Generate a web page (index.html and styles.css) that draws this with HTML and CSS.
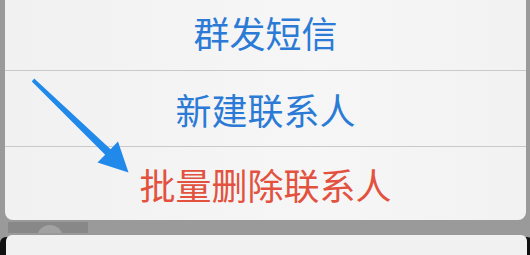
FILE: index.html
```html
<html>
   <head>
      <title>Contacts menu</title>
      <meta charset="utf-8">
      <link rel="stylesheet" href="styles.css">
   </head>

   <body>
      <div class="screen">
         <div class="sheet">
            <div class="item first blue">群发短信</div>
            <div class="item blue">新建联系人</div>
            <div class="item last red">批量删除联系人</div>
         </div>
         <div class="gap">
            <div class="ghost"><span class="knob"></span></div>
         </div>
         <div class="cancel"></div>
         <svg class="arrow" width="530" height="255" viewBox="0 0 530 255">
            <polygon points="34.2,78.6 110.6,149.2 118,141.5 128.5,172.5 97.5,162.5 105.2,154.8 31.8,81.4" fill="#2189ea"/>
         </svg>
      </div>
   </body>
</html>
```

FILE: styles.css
```css
body {margin: 0; background: #9a9a9a; font-family: "Noto Sans CJK SC", "Noto Sans", sans-serif;}
.screen {position: relative; width: 530px; height: 255px; overflow: hidden; background: #9a9a9a;}
.sheet {margin: 0 4px 0 5px; background: linear-gradient(to right, #f1f1f1, #f6f6f6 60%, #f2f2f2); border-radius: 0 0 8px 8px;}
.item {height: 75px; display: flex; align-items: center; justify-content: center; font-size: 36px; border-top: 1px solid #c9c9c9;}
.item.first {height: 70px; border-top: none; padding-bottom: 0; margin-top: 0; align-items: flex-start; line-height: 64px;}
.item.last {height: 73px;}
.blue {color: #2b7bd6;}
.red {color: #e2523e;}
.gap {height: 15px; padding: 2px 0 0 8px; box-sizing: border-box;}
.ghost {position: relative; width: 80px; height: 11px; background: #888; overflow: hidden;}
.knob {position: absolute; left: 29px; top: 3px; width: 26px; height: 26px; border-radius: 50%; background: #a2a2a2;}
.cancel {height: 30px; margin: 0 3px 0 6px; background: #f1f1f1; border-radius: 6px 6px 0 0; box-shadow: -6px 2px 0 #111, 6px 2px 0 #111;}
.arrow {position: absolute; left: 0; top: 0;}
```
